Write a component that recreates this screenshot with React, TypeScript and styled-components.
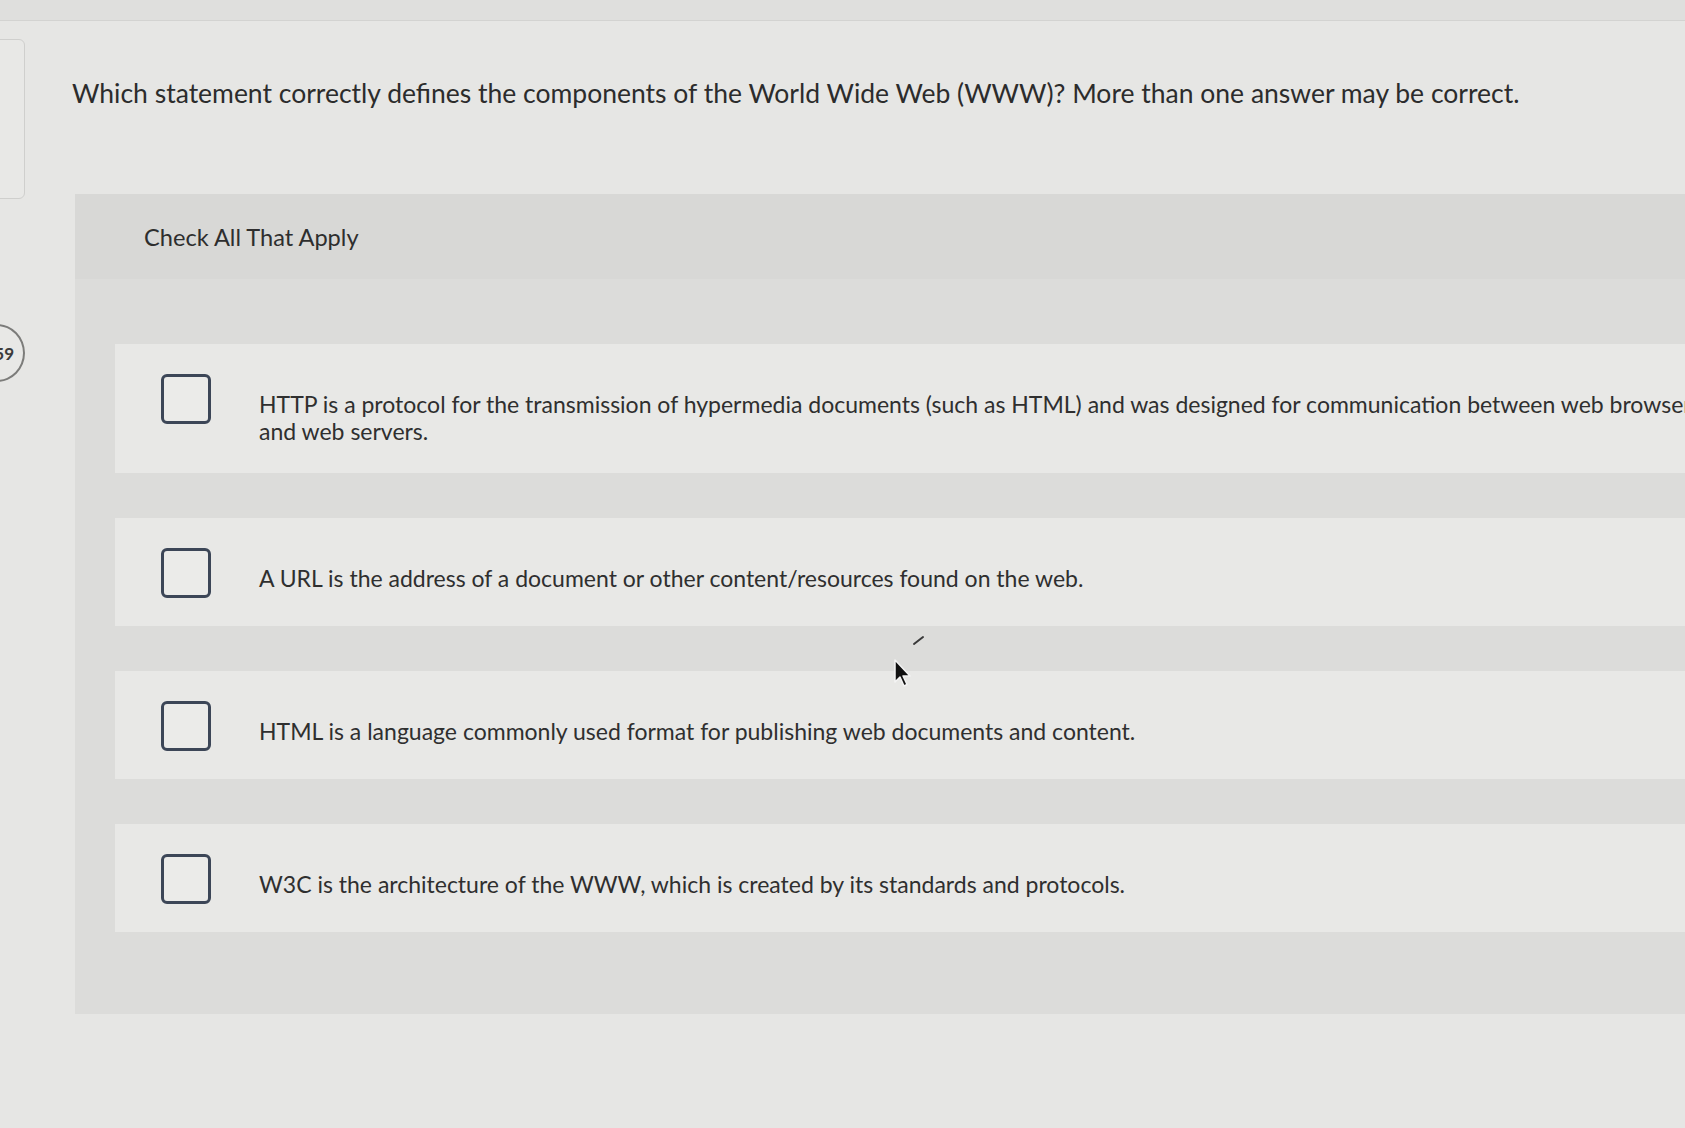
import styled, { createGlobalStyle } from 'styled-components'

const options = [
  'HTTP is a protocol for the transmission of hypermedia documents (such as HTML) and was designed for communication between web browsers and web servers.',
  'A URL is the address of a document or other content/resources found on the web.',
  'HTML is a language commonly used format for publishing web documents and content.',
  'W3C is the architecture of the WWW, which is created by its standards and protocols.',
]

function App() {
  return (
    <>
      <GlobalStyle />
      <Page>
        <TopStrip />
        <Layout>
          <LeftRail>
            <SideTab />
            <NumberBadge>59</NumberBadge>
          </LeftRail>
          <Main>
            <Question>
              Which statement correctly defines the components of the World Wide Web (WWW)? More
              than one answer may be correct.
            </Question>
            <Panel>
              <PanelHeader>Check All That Apply</PanelHeader>
              <OptionList>
                {options.map((text) => (
                  <OptionCard key={text}>
                    <Checkbox type="button" aria-label="select option" />
                    <OptionText>{text}</OptionText>
                  </OptionCard>
                ))}
              </OptionList>
            </Panel>
          </Main>
        </Layout>
        <Pointer viewBox="0 0 40 40" aria-hidden>
          <path d="M21 6 L30 -1" stroke="#3a3a3a" strokeWidth="2" strokeLinecap="round" />
          <path
            d="M2 22 L2 44 L7 39 L11 48 L14 46.5 L10 38 L17 38 Z"
            fill="#111"
            stroke="#f4f4f4"
            strokeWidth="1.5"
            strokeLinejoin="round"
          />
        </Pointer>
      </Page>
    </>
  )
}

const GlobalStyle = createGlobalStyle`
  html, body {
    margin: 0;
    padding: 0;
    background: #e6e6e4;
  }
  body {
    font-family: Lato, 'Open Sans', sans-serif;
    overflow: hidden;
  }
`

const Page = styled.div`
  position: relative;
  width: 1685px;
  height: 1128px;
  overflow: hidden;
  background: #e6e6e4;
`

const TopStrip = styled.div`
  height: 20px;
  background: #dfdfdd;
  border-bottom: 1px solid #d3d3d1;
`

const Layout = styled.div`
  display: flex;
  align-items: flex-start;
`

const LeftRail = styled.div`
  width: 25px;
  flex-shrink: 0;
  display: flex;
  flex-direction: column;
  padding-top: 18px;
`

const SideTab = styled.div`
  margin-left: -10px;
  width: 33px;
  height: 158px;
  border: 1px solid #cfcfcd;
  border-radius: 6px;
  background: #e8e8e6;
`

const NumberBadge = styled.div`
  margin-top: 125px;
  margin-left: -31px;
  width: 56px;
  height: 58px;
  border-radius: 50%;
  border: 2px solid #7c7c7a;
  background: #e8e8e6;
  display: flex;
  align-items: center;
  justify-content: flex-end;
  padding-right: 9px;
  box-sizing: border-box;
  font-size: 17px;
  font-weight: 700;
  color: #3b3b3b;
`

const Main = styled.main`
  flex: 1;
  min-width: 0;
  padding-left: 47px;
`

const Question = styled.h1`
  margin: 57px 0 0;
  font-size: 26.5px;
  line-height: 1.2;
  font-weight: 400;
  color: #2c2c2c;
  white-space: nowrap;
`

const Panel = styled.section`
  margin-top: 84px;
  margin-left: 3px;
  margin-right: -300px;
  background: #dcdcda;
`

const PanelHeader = styled.div`
  padding: 29px 0 28px 69px;
  font-size: 23.6px;
  line-height: 1.2;
  color: #2e2e2e;
  background: #d8d8d6;
`

const OptionList = styled.div`
  display: flex;
  flex-direction: column;
  gap: 45px;
  padding: 65px 0 82px 40px;
`

const OptionCard = styled.div`
  display: flex;
  align-items: flex-start;
  gap: 48px;
  padding: 30px 0 28px 46px;
  background: #e8e8e6;
`

const Checkbox = styled.button`
  flex-shrink: 0;
  width: 50px;
  height: 50px;
  padding: 0;
  border: 3px solid #3c4657;
  border-radius: 6px;
  background: #ebebe9;
`

const OptionText = styled.p`
  margin: 17px 0 0;
  max-width: 1470px;
  font-size: 23px;
  line-height: 27px;
  color: #2f2f2f;
`

const Pointer = styled.svg`
  position: absolute;
  left: 893px;
  top: 638px;
  width: 40px;
  height: 40px;
  overflow: visible;
`

export default App
